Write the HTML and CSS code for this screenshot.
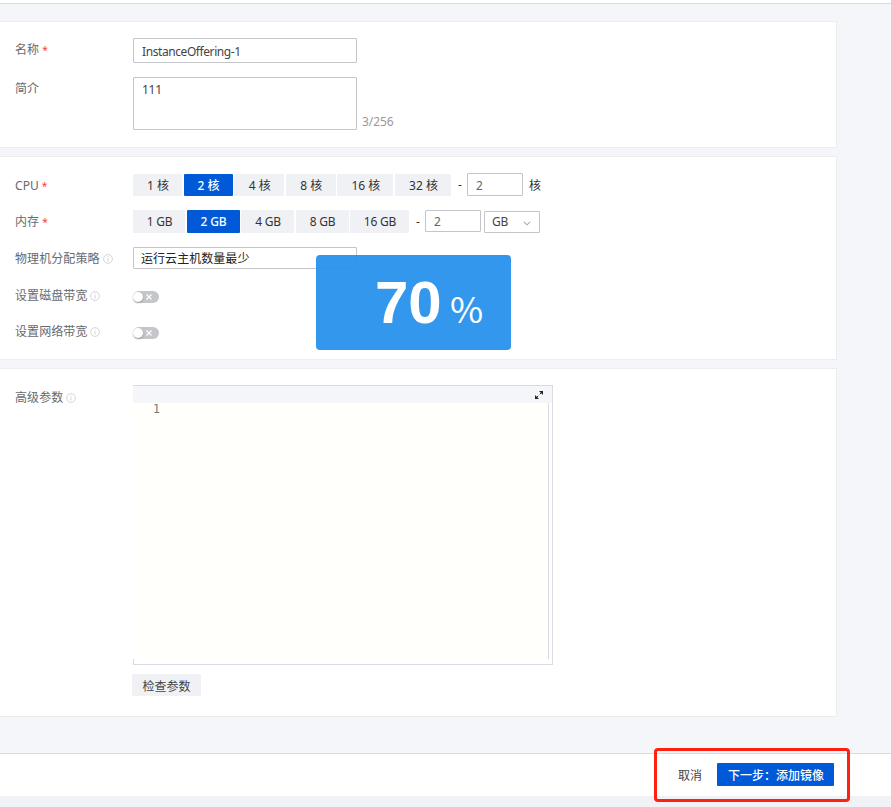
FILE: index.html
```html
<!DOCTYPE html>
<html lang="zh-CN">
<head>
<meta charset="utf-8">
<title>InstanceOffering</title>
<link rel="stylesheet" href="styles.css">
</head>
<body>
<svg class="defs" width="0" height="0"><symbol id="info" viewBox="0 0 10 10"><circle cx="5" cy="5" r="4.4" fill="none" stroke="currentColor" stroke-width=".9"/><path d="M5 4.3v3.2M5 2.4v1" stroke="currentColor" stroke-width="1"/></symbol><symbol id="down" viewBox="0 0 8 5"><path d="M.8.8 4 3.8 7.2.8" fill="none" stroke="currentColor" stroke-width="1.1"/></symbol></svg>
<div class="topbar"></div>
<main>
  <section class="card basic">
    <div class="row name-row"><label class="label">名称<i>*</i></label><div class="box name">InstanceOffering-1</div></div>
    <div class="row desc-row"><label class="label">简介</label><div class="box area">111</div><span class="count">3/256</span></div>
  </section>
  <section class="card spec">
    <div class="row cpu-row"><label class="label">CPU<i>*</i></label>
      <div class="options cpu"><button>1 核</button><button class="on">2 核</button><button>4 核</button><button>8 核</button><button>16 核</button><button>32 核</button></div>
      <span class="dash">-</span><div class="box num">2</div><span class="unit">核</span>
    </div>
    <div class="row mem-row"><label class="label">内存<i>*</i></label>
      <div class="options mem"><button>1 GB</button><button class="on">2 GB</button><button>4 GB</button><button>8 GB</button><button>16 GB</button></div>
      <span class="dash">-</span><div class="box num">2</div><div class="box gb">GB<svg class="down"><use href="#down"/></svg></div>
    </div>
    <div class="row policy-row"><label class="label">物理机分配策略<svg class="info"><use href="#info"/></svg></label><div class="box policy">运行云主机数量最少<svg class="down"><use href="#down"/></svg></div></div>
    <div class="row disk-row"><label class="label">设置磁盘带宽<svg class="info"><use href="#info"/></svg></label><span class="switch"><b></b><svg viewBox="0 0 6 6"><path d="M.5.5l5 5M5.5.5l-5 5"/></svg></span></div>
    <div class="row net-row"><label class="label">设置网络带宽<svg class="info"><use href="#info"/></svg></label><span class="switch"><b></b><svg viewBox="0 0 6 6"><path d="M.5.5l5 5M5.5.5l-5 5"/></svg></span></div>
    <div class="progress"><strong>70</strong><span>%</span></div>
  </section>
  <section class="card advanced">
    <div class="row adv-row"><label class="label">高级参数<svg class="info"><use href="#info"/></svg></label>
      <div class="editor-wrap">
        <div class="editor">
          <div class="editor-head"><svg width="8" height="8" viewBox="0 0 8 8"><path d="M4 0H8v4zM0 4V8h4z" fill="#222"/><path d="M7 1 4.8 3.2M1 7l2.2-2.2" stroke="#222"/></svg></div>
          <div class="editor-body"><span>1</span></div>
          <div class="editor-foot"></div>
        </div>
        <button class="check">检查参数</button>
      </div>
    </div>
  </section>
</main>
<footer><button class="cancel">取消</button><button class="next">下一步：添加镜像</button><div class="highlight"></div></footer>
</body>
</html>
```

FILE: styles.css
```css
* { box-sizing: border-box; }
body { margin: 0; width: 891px; height: 807px; overflow: hidden; background: #f0f2f5; font: 12px/18px "Noto Sans", "Noto Sans CJK SC", sans-serif; color: #333; }
button { border: 0; padding: 0; font: inherit; color: inherit; }
svg { display: block; flex: none; }
.defs { position: absolute; }
.topbar { height: 4px; background: #fff; border-bottom: 1px solid #d9dbe2; }
main { height: 749px; padding-top: 17px; background: #f5f6fa; }
.card { width: 837px; background: #fff; border: 1px solid #ededf0; border-left: 0; position: relative; padding-left: 15px; }
.basic { height: 127px; padding-top: 16px; margin-bottom: 8px; }
.spec { height: 204px; padding-top: 16px; margin-bottom: 8px; }
.advanced { height: 349px; padding-top: 16px; }
.row { display: flex; align-items: flex-start; }
.label { width: 118px; flex: none; display: flex; align-items: center; color: #666a70; white-space: nowrap; letter-spacing: .08px; }
.label i { color: #ff3b30; font-style: normal; font-size: 10px; margin-left: 3px; line-height: 16px; }
.info { width: 10px; height: 10px; margin: -1px 0 0 3px; color: #cfd1d6; }
.box { border: 1px solid #c4c5c8; border-radius: 1px; background: #fff; padding-left: 8px; color: #444; }
.name-row { height: 39px; }
.name-row .label, .desc-row .label { margin-top: 3px; }
.name { width: 224px; height: 25px; line-height: 25px; letter-spacing: -.42px; }
.area { width: 224px; height: 53px; padding-top: 3px; letter-spacing: -.3px; }
.count { margin: 36px 0 0 5px; color: #999; letter-spacing: -.1px; }
.cpu-row { height: 37px; }
.cpu-row .label { margin-top: 4px; }
.options { display: grid; margin-top: 1px; }
.options button { background: #f0f1f5; height: 22px; border-radius: 1px; line-height: 24px; white-space: nowrap; padding-left: 1px; }
.options .on { background: #0059d6; color: #fff; font-weight: 500; }
.cpu { grid-template-columns: 49px 49px 50px 50px 56px 56px; column-gap: 1.6px; }
.mem { grid-template-columns: 52px 53px 53px 53px 59px; column-gap: 1.5px; margin-top: 0; }
.options.mem button { height: 23px; line-height: 23px; letter-spacing: -.2px; }
.dash { width: 16px; text-align: center; margin-top: 3px; padding-left: 2px; }
.num { width: 56px; height: 23px; line-height: 23px; color: #666; }
.unit { margin: 4px 0 0 6px; }
.mem-row { height: 37px; }
.mem-row .label { margin-top: 3px; }
.mem-row .num { height: 22px; line-height: 22px; }
.gb { width: 56px; height: 22px; line-height: 20px; margin: 1px 0 0 3px; display: flex; align-items: flex-start; justify-content: space-between; padding-left: 7px; padding-right: 8px; letter-spacing: -.2px; }
.down { width: 8px; height: 5px; color: #aaa; }
.gb .down { margin-top: 9px; }
.policy-row { height: 37px; }
.policy-row .label { margin-top: 3px; }
.policy { width: 224px; height: 22px; line-height: 22px; display: flex; align-items: flex-start; justify-content: space-between; padding-left: 7px; padding-right: 8px; color: #222; letter-spacing: .05px; }
.policy .down { margin-top: 9px; }
.disk-row { height: 36px; padding-top: 3px; }
.net-row { padding-top: 3px; }
.switch { width: 26px; height: 12px; border-radius: 6px; background: #c5c6c9; display: flex; align-items: center; justify-content: space-between; margin-top: 4px; padding: 0 7px 0 0; }
.switch b { width: 10px; height: 10px; border-radius: 50%; background: #fff; box-shadow: 0 1px 2px #0004; }
.switch svg { width: 6px; height: 6px; stroke: #fff; stroke-width: 1.2; }
.progress { position: absolute; left: 316px; top: 98px; width: 195px; height: 95px; border-radius: 4px; background: rgba(38,144,237,.94); color: #fff; display: flex; align-items: baseline; padding: 17px 0 0 59px; }
.progress strong { font: bold 60px/62px "Liberation Sans", sans-serif; width: 75px; }
.progress span { font: 36px/62px "Noto Sans CJK SC", sans-serif; }
.adv-row .label { margin-top: 4px; }
.editor-wrap { width: 420px; }
.editor { height: 280px; border: solid #dadbdf; border-width: 1px 1px 1px 0; }
.editor-head { height: 17px; background: #f5f6fa; display: flex; justify-content: flex-end; padding: 5px 9px 0 0; }
.editor-body { height: 256px; width: 416px; background: #fffffc; border-right: 1px solid #dadbdf; font: 11.5px/12px "DejaVu Sans Mono", monospace; color: #777; padding-left: 20px; }
.editor-foot { height: 5px; border-left: 1px solid #dadbdf; }
.check { display: block; width: 69px; height: 22px; line-height: 26px; margin: 9px 0 0 -1px; border-radius: 1px; background: #f0f1f5; color: #444; }
footer { height: 43px; background: #fff; border-top: 1px solid #dadbdd; display: flex; justify-content: flex-end; padding: 9px 57px 0 0; position: relative; }
.cancel { background: transparent; height: 23px; line-height: 25px; margin-right: 15px; color: #444; }
.next { width: 117px; height: 23px; line-height: 25px; padding-left: 1px; background: #0059d6; color: #fff; border-radius: 1px; font-weight: 500; white-space: nowrap; }
.highlight { position: absolute; left: 654px; top: -6px; width: 196px; height: 54px; border: 3px solid #ff2012; border-radius: 4px; }
```
